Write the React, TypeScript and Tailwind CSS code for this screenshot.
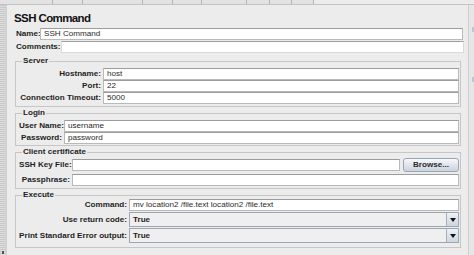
const tabs = [53, 30, 60, 30, 29, 45, 23, 22, 22];

function Field({ value, className = "" }: { value?: string; className?: string }) {
  return (
    <div
      className={`flex h-[12px] items-center border border-[#b9b9b9] border-t-[#9c9c9c] bg-white pl-[3px] text-[8.1px] leading-[10px] whitespace-nowrap text-[#2a2a2a] ${className}`}
    >
      {value}
    </div>
  );
}

function Label({ text }: { text: string }) {
  return (
    <div className="pr-[2px] text-right text-[8.1px] leading-[10px] font-bold whitespace-nowrap text-[#1e1e1e]">
      {text}
    </div>
  );
}

function Combo({ value }: { value: string }) {
  return (
    <div className="flex h-[15px] border border-[#9ba6b6] bg-[#efefef]">
      <div className="flex flex-1 items-center pl-[3px] text-[8.1px] leading-[10px] font-bold text-[#1e1e1e]">
        {value}
      </div>
      <div className="flex w-[12px] items-center justify-center border-l border-[#a5afbd] bg-gradient-to-b from-[#eef1f5] to-[#cfd6df]">
        <svg width="6" height="4" viewBox="0 0 6 4">
          <path d="M0 0h6L3 4z" fill="#111" />
        </svg>
      </div>
    </div>
  );
}

function Group({ title, className = "", children }: { title: string; className?: string; children: React.ReactNode }) {
  return (
    <fieldset className={`ml-[8px] w-[446px] border border-[#c6c6c6] pl-[3px] pr-[1px] ${className}`}>
      <legend className="ml-[3px] px-[1px] text-[8.1px] leading-[8px] font-bold text-[#1e1e1e]">{title}</legend>
      {children}
    </fieldset>
  );
}

export default function App() {
  return (
    <div className="flex h-[255px] w-[474px] flex-col overflow-hidden bg-[#ececec] font-['Liberation_Sans',Arial,sans-serif]">
      {/* tab strip */}
      <div className="flex h-[5px] border-b border-[#c4c4c4] bg-[#ececec]">
        {tabs.map((w, i) => (
          <div key={i} className="h-full border-r border-[#b4b4b4] bg-[#e2e2e2]" style={{ width: w }} />
        ))}
      </div>

      <div className="flex flex-1">
        {/* left splitter */}
        <div className="relative w-[6px] bg-[repeating-linear-gradient(0deg,#dcdcdc_0px,#dcdcdc_1px,#c9c9c9_1px,#c9c9c9_2px)]">
          <div className="absolute bottom-[1px] left-[2px] h-[3px] w-[2px] bg-[#555]" />
        </div>

        {/* panel */}
        <div className="w-[463px] border-x border-[#cfcfcf] bg-[#ececec]">
          <div className="mt-[6px] pl-[7px] text-[11.5px] leading-[14px] font-bold tracking-[-0.6px] text-[#111]">
            SSH Command
          </div>

          <div className="mt-[3px] grid grid-cols-[24px_1fr] items-center pl-[9px] pr-[5px]">
            <Label text="Name:" />
            <Field value="SSH Command" />
          </div>
          <div className="mt-[1px] grid grid-cols-[45px_1fr] items-center pl-[9px] pr-[4px]">
            <Label text="Comments:" />
            <Field className="border-[#dadada]" />
          </div>

          <Group title="Server" className="mt-[4px] pb-[2px]">
            <div className="mt-[3px] grid grid-cols-[84px_1fr] items-center">
              <Label text="Hostname:" />
              <Field value="host" />
              <Label text="Port:" />
              <Field value="22" />
              <Label text="Connection Timeout:" />
              <Field value="5000" />
            </div>
          </Group>

          <Group title="Login" className="mt-[2px] pb-[1px]">
            <div className="mt-[3px] grid grid-cols-[45px_1fr] items-center">
              <Label text="User Name:" />
              <Field value="username" />
              <Label text="Password:" />
              <Field value="password" />
            </div>
          </Group>

          <Group title="Client certificate" className="mt-[2px] pb-[2px]">
            <div className="mt-[2px] grid grid-cols-[53px_1fr] items-center gap-y-[2px]">
              <Label text="SSH Key File:" />
              <div className="flex h-[14px] items-center gap-[3px]">
                <Field className="flex-1" />
                <button className="h-[14px] w-[56px] rounded-[3px] border border-[#9aa5b4] bg-gradient-to-b from-[#f7f9fb] to-[#c9d2dd] text-[8.1px] leading-[10px] font-bold text-[#2b2b2b]">
                  Browse...
                </button>
              </div>
              <Label text="Passphrase:" />
              <Field />
            </div>
          </Group>

          <Group title="Execute" className="mt-[2px] pb-[4px]">
            <div className="grid grid-cols-[110px_1fr] items-center gap-y-[1px]">
              <Label text="Command:" />
              <Field value="mv location2 /file.text location2 /file.text" />
              <Label text="Use return code:" />
              <Combo value="True" />
              <Label text="Print Standard Error output:" />
              <Combo value="True" />
            </div>
          </Group>
        </div>

        {/* right edge */}
        <div className="relative w-[5px] bg-[#e6e6e6]">
          <div className="absolute left-[3px] top-[22px] h-[5px] w-[2px] bg-[#b9c6d6]" />
          <div className="absolute left-[3px] top-[72px] h-[5px] w-[2px] bg-[#b9c6d6]" />
        </div>
      </div>
    </div>
  );
}
